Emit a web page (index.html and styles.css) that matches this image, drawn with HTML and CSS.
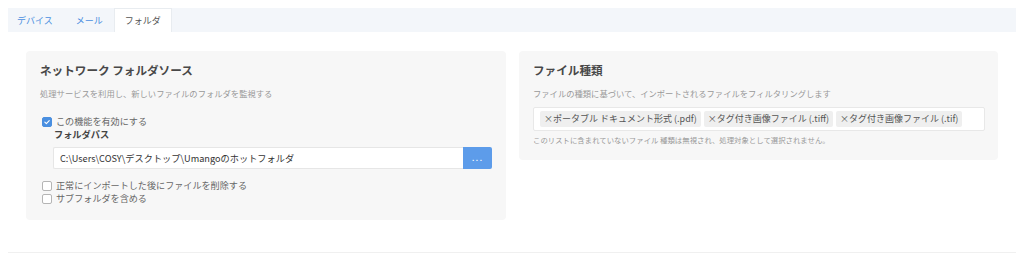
FILE: index.html
```html
<!DOCTYPE html>
<html lang="ja">
<head>
<meta charset="utf-8">
<link rel="stylesheet" href="styles.css">
</head>
<body>
<div class="tabs">
  <span class="tab">デバイス</span>
  <span class="tab">メール</span>
  <span class="tab active">フォルダ</span>
</div>
<div class="content">
  <section class="card card-left">
    <h2 class="title">ネットワーク フォルダソース</h2>
    <p class="desc">処理サービスを利用し、新しいファイルのフォルダを監視する</p>
    <label class="check check-first"><span class="box checked"><svg viewBox="0 0 10 10" width="8" height="8"><path d="M2.3 5.2 L4.2 7 L7.8 3.2" fill="none" stroke="#fff" stroke-width="1.4" stroke-linecap="round" stroke-linejoin="round"/></svg></span>この機能を有効にする</label>
    <div class="field-label">フォルダパス</div>
    <div class="path-row">
      <div class="path-input">C:\Users\COSY\デスクトップ\Umangoのホットフォルダ</div>
      <div class="path-btn">...</div>
    </div>
    <label class="check check-gap"><span class="box"></span>正常にインポートした後にファイルを削除する</label>
    <label class="check"><span class="box"></span>サブフォルダを含める</label>
  </section>
  <section class="card card-right">
    <h2 class="title">ファイル種類</h2>
    <p class="desc">ファイルの種類に基づいて、インポートされるファイルをフィルタリングします</p>
    <div class="tag-box">
      <span class="tag">×ポータブル ドキュメント形式 (.pdf)</span>
      <span class="tag">×タグ付き画像ファイル (.tiff)</span>
      <span class="tag">×タグ付き画像ファイル (.tif)</span>
    </div>
    <p class="help">このリストに含まれていないファイル 種類は無視され、処理対象として選択されません。</p>
  </section>
</div>
<div class="footer-line"></div>
</body>
</html>
```
FILE: styles.css
```css
* { box-sizing: border-box; }
html, body { margin: 0; padding: 0; background: #fff; }
body {
  padding: 8px;
  font-family: "Noto Sans CJK JP", "Noto Sans", sans-serif;
  color: #555;
}
.tabs {
  display: flex;
  height: 24px;
  background: #f3f6fa;
}
.tab {
  display: flex;
  align-items: center;
  padding: 0 10px;
  font-size: 9px;
  color: #4a8fe0;
  height: 24px;
}
.tab:first-child { padding-left: 9px; padding-right: 12px; }
.tab:nth-child(2) { padding-left: 11px; }
.tab.active {
  background: #fff;
  color: #555;
  border: 1px solid #e8ecf0;
  border-bottom: none;
  padding: 0 10px;
  margin-left: 1px;
}
.content {
  display: flex;
  align-items: flex-start;
  gap: 13px;
  padding: 19px 18px 0 18px;
}
.card {
  background: #f7f7f7;
  border-radius: 4px;
  padding: 12px 14px 0 14px;
}
.card-left { width: 480px; height: 169px; }
.card-right { width: 479px; height: 109px; }
.title {
  margin: 0;
  font-size: 11.6px;
  font-weight: bold;
  color: #484848;
  line-height: 15px;
}
.desc {
  margin: 9px 0 0 0;
  font-size: 8.3px;
  color: #999;
  line-height: 12px;
}
.check {
  display: flex;
  align-items: center;
  font-size: 9.1px;
  color: #666;
  line-height: 13px;
  height: 13px;
  margin-left: 2px;
}
.check-first { margin-top: 16px; }
.box {
  width: 10px;
  height: 10px;
  border: 1px solid #b5b5b5;
  border-radius: 2px;
  background: #fff;
  margin-right: 4px;
  display: flex;
  align-items: center;
  justify-content: center;
}
.box.checked { background: #4a8fe0; border-color: #4a8fe0; }
.field-label {
  font-size: 9.2px;
  font-weight: bold;
  color: #444;
  margin-left: 14px;
  line-height: 13px;
}
.path-row {
  display: flex;
  margin: 6px 0 0 13px;
  height: 22px;
  width: 439px;
}
.path-input {
  flex: 1;
  background: #fff;
  border: 1px solid #e6e6e6;
  border-right: none;
  border-radius: 2px 0 0 2px;
  font-size: 9.2px;
  color: #333;
  padding-left: 6px;
  display: flex;
  align-items: center;
}
.path-btn {
  width: 29px;
  background: #5d9cea;
  color: #fff;
  border-radius: 0 2px 2px 0;
  font-size: 10px;
  letter-spacing: 1px;
  display: flex;
  align-items: center;
  justify-content: center;
  line-height: 1;
  padding-bottom: 2px;
}
.check-gap { margin-top: 10px; }
.tag-box {
  margin-top: 8px;
  background: #fff;
  border: 1px solid #e8e8e8;
  border-radius: 2px;
  height: 24px;
  width: 452px;
  display: flex;
  align-items: center;
  gap: 3px;
  padding-left: 6px;
}
.tag {
  background: #efefef;
  font-size: 9px;
  color: #555;
  padding: 0 4px;
  height: 16px;
  line-height: 16px;
  border-radius: 2px;
}
.help {
  margin: 3px 0 0 0;
  font-size: 7.4px;
  color: #999;
  line-height: 12px;
}
.footer-line {
  margin-top: 32px;
  border-top: 1px solid #f0f0f0;
}
```
